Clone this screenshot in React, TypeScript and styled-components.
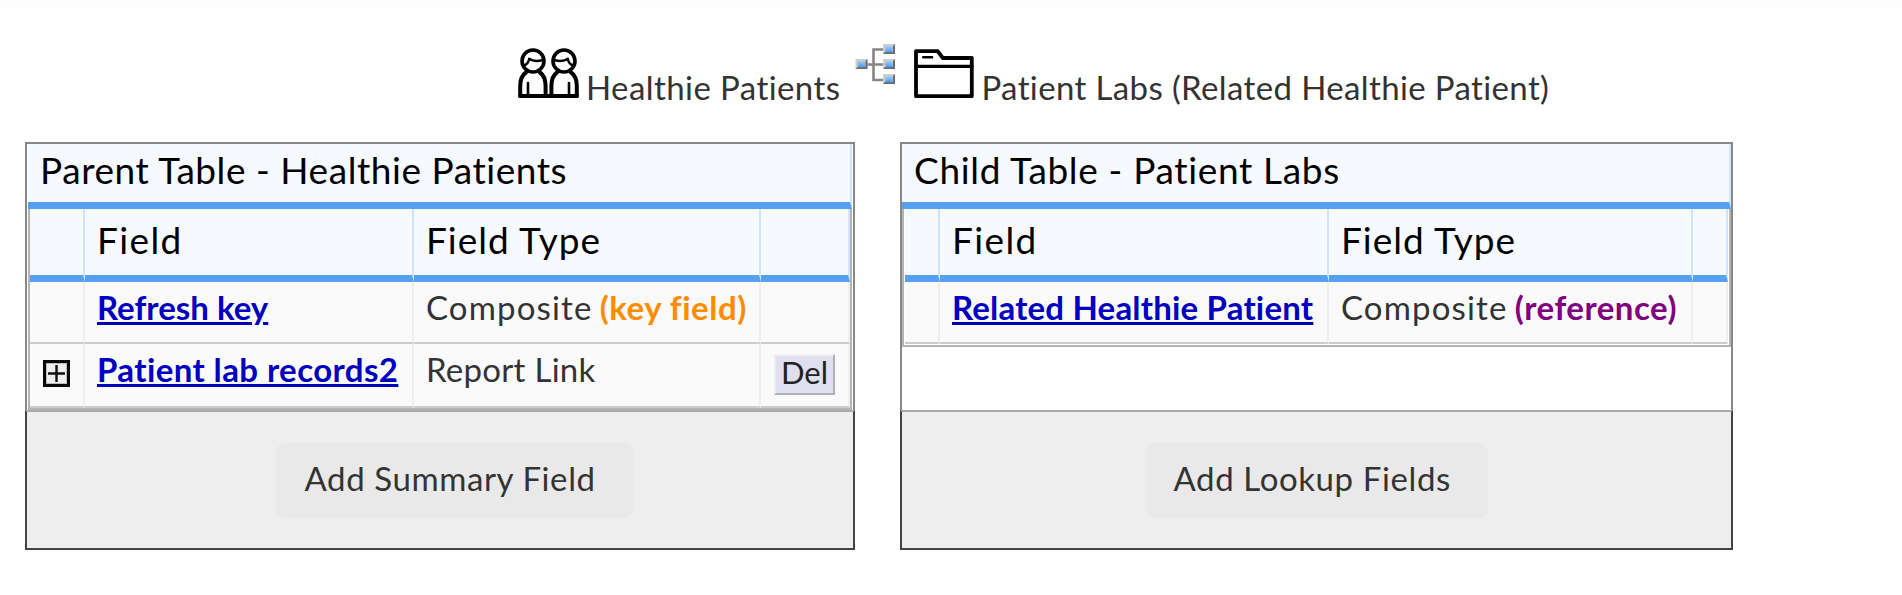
import React from "react";
import styled, { createGlobalStyle } from "styled-components";

const GlobalStyle = createGlobalStyle`
  * { box-sizing: border-box; }
  body {
    margin: 0;
    background: #fff;
    color: #333;
    font-family: "Lato", "Open Sans", sans-serif;
    font-size: 33px;
  }
`;

const Page = styled.main`
  width: 1902px;
  height: 595px;
  border-top: 7px solid #fdfdfd;
  overflow: hidden;
`;

const Relationship = styled.header`
  display: flex;
  align-items: flex-start;
  height: 135px;
  padding: 37px 0 0 518px;
`;

const IconSlot = styled.span<{ $top: number; $left?: number }>`
  flex: none;
  margin: ${(p) => p.$top}px 0 0 ${(p) => p.$left ?? 0}px;
  line-height: 0;
`;

const TableName = styled.span<{ $left: number; $spacing: number }>`
  margin: 23px 0 0 ${(p) => p.$left}px;
  line-height: 40px;
  letter-spacing: ${(p) => p.$spacing}px;
  white-space: nowrap;
`;

const Panels = styled.div`
  display: flex;
  gap: 45px;
  padding-left: 25px;
`;

const Panel = styled.section<{ $width: number }>`
  width: ${(p) => p.$width}px;
`;

const PanelBody = styled.div<{ $inset: number }>`
  height: 268px;
  border: 2px solid #888;
  border-bottom: 0;
  padding: 0 ${(p) => p.$inset}px;
`;

const PanelTitle = styled.h2<{ $spacing: number }>`
  height: 65px;
  margin: 0;
  padding-left: 12px;
  border-right: 2px solid #cfe4fa;
  border-bottom: 7px solid #55a0f0;
  background: #f6faff;
  color: #000;
  font-size: 37px;
  font-weight: 400;
  line-height: 51px;
  letter-spacing: ${(p) => p.$spacing}px;
  white-space: nowrap;
`;

const FieldTable = styled.div<{ $pad: number }>`
  border: 2px solid #b4b4b4;
  border-top: 0;
  padding: 0 ${(p) => p.$pad}px ${(p) => p.$pad}px;
`;

const Row = styled.div<{ $columns: string; $height: number }>`
  display: grid;
  grid-template-columns: ${(p) => p.$columns};
  height: ${(p) => p.$height}px;
`;

const HeadCell = styled.div<{ $spacing?: number }>`
  padding-left: 12px;
  border-right: 2px solid #cfe4fa;
  border-bottom: 7px solid #55a0f0;
  background: #f6faff;
  color: #000;
  font-size: 37px;
  line-height: 61px;
  letter-spacing: ${(p) => p.$spacing ?? 0}px;
  white-space: nowrap;
`;

const Cell = styled.div`
  padding-left: 12px;
  border-right: 2px solid #efefef;
  border-bottom: 2px solid #cccccc;
  background: #fafafa;
  line-height: 50px;
  white-space: nowrap;
`;

const FieldLink = styled.a<{ $spacing: number }>`
  color: #0000bf;
  font-weight: 700;
  letter-spacing: ${(p) => p.$spacing}px;
  text-decoration: underline;
  text-decoration-thickness: 3px;
  text-underline-offset: 2px;
`;

const TypeName = styled.span<{ $spacing: number }>`
  letter-spacing: ${(p) => p.$spacing}px;
`;

const Tag = styled.b<{ $color: string }>`
  margin-left: -1.2px;
  color: ${(p) => p.$color};
  font-weight: 700;
  letter-spacing: 0.5px;
`;

const ExpandButton = styled.button`
  display: block;
  width: 27px;
  height: 27px;
  margin: 16px 0 0 1px;
  padding: 0;
  border: 0;
  background: none;
  line-height: 0;
`;

const DeleteButton = styled.button`
  display: block;
  width: 61px;
  height: 41px;
  margin: 10px 0 0 1px;
  padding: 0 0 4px 5px;
  border: 2px solid;
  border-color: #eeeeee #b0b0b4 #b0b0b4 #eeeeee;
  background: #e0dff0;
  color: #222;
  font: 31px/33px "Lato", sans-serif;
  text-align: left;
`;

const PanelFooter = styled.footer`
  display: flex;
  height: 140px;
  border: 2px solid #444;
  border-top: 2px solid #aaa;
  background: #eeeeee;
`;

const AddButton = styled.button<{ $left: number; $width: number }>`
  width: ${(p) => p.$width}px;
  height: 75px;
  margin: 31px 0 0 ${(p) => p.$left}px;
  padding: 0 0 5px 28.5px;
  border: 0;
  border-radius: 9px;
  background: #e9e9e9;
  color: #333;
  font: 33px/70px "Lato", sans-serif;
  letter-spacing: 0.6px;
  text-align: left;
  white-space: nowrap;
`;

function Person() {
  return (
    <>
      <circle cx="15" cy="13" r="11" strokeWidth="3.6" />
      <path d="M8.5 24C4 27 2.2 32 2.2 38V48H27.6V38C27.6 32 25.8 27 21.5 24" strokeWidth="4" />
      <path d="M10 35V47" strokeWidth="2.6" />
      <path d="M5.2 17.6C8.8 17 10.6 14.5 11.2 10.8C14.5 13.2 20 13.4 25 12" strokeWidth="2.4" />
    </>
  );
}

function PeopleIcon() {
  return (
    <svg width="61" height="50" viewBox="0 0 61 50" fill="none" stroke="#000" strokeLinecap="round" strokeLinejoin="round">
      <Person />
      <g transform="translate(61 0) scale(-1 1)">
        <Person />
      </g>
      <path d="M2 48H59" strokeWidth="4" />
    </svg>
  );
}

function TreeIcon() {
  const nodes = [
    [0.5, 15],
    [28, 0],
    [28, 15],
    [28, 30],
  ];
  return (
    <svg width="40" height="40" viewBox="0 0 40 40">
      <defs>
        <linearGradient id="node" x1="0" y1="0" x2="0" y2="1">
          <stop offset="0" stopColor="#a5cdf4" />
          <stop offset="1" stopColor="#489bee" />
        </linearGradient>
      </defs>
      <path d="M28 5.5H18.5V36H28M12 20.5H28" fill="none" stroke="#858585" strokeWidth="2.6" />
      {nodes.map(([x, y]) => (
        <g key={`${x}-${y}`}>
          <rect x={x} y={y} width="12" height="10" fill="#cdcdcd" />
          <path d={`M${x + 12} ${y}v10h-12l2 -2h8v-6z`} fill="#6c6c6c" />
          <rect x={x + 2.4} y={y + 2} width="7.2" height="6.2" fill="url(#node)" />
        </g>
      ))}
    </svg>
  );
}

function FolderIcon() {
  return (
    <svg width="60" height="50" viewBox="0 0 60 50" fill="none" stroke="#000" strokeLinejoin="round" strokeLinecap="round">
      <path d="M2 2.2H23.7L28.8 9H57.8V47.2H2Z" strokeWidth="3.8" />
      <path d="M2 17.4H57.8" strokeWidth="3.4" />
      <path d="M9.3 8.3H18" strokeWidth="2.6" />
    </svg>
  );
}

function PlusBoxIcon() {
  return (
    <svg width="27" height="27" viewBox="0 0 27 27">
      <rect width="27" height="27" fill="#080808" />
      <rect x="3" y="3" width="21" height="21" fill="#bdbdbd" />
      <rect x="4" y="4" width="19" height="19" fill="#efefef" />
      <path d="M5 13.5H22M13.5 5V22" stroke="#111" strokeWidth="2.4" />
    </svg>
  );
}

const parentColumns = "55px 329px 347px 89px";
const childColumns = "35px 389px 364px 35px";

export default function App() {
  return (
    <>
      <GlobalStyle />
      <Page>
        <Relationship>
          <IconSlot $top={4}>
            <PeopleIcon />
          </IconSlot>
          <TableName $left={7} $spacing={0.42}>Healthie Patients</TableName>
          <IconSlot $top={0} $left={15}>
            <TreeIcon />
          </IconSlot>
          <IconSlot $top={5} $left={19}>
            <FolderIcon />
          </IconSlot>
          <TableName $left={7} $spacing={0.37}>Patient Labs (Related Healthie Patient)</TableName>
        </Relationship>

        <Panels>
          <Panel $width={830}>
            <PanelBody $inset={1}>
              <PanelTitle $spacing={0.56}>Parent Table - Healthie Patients</PanelTitle>
              <FieldTable $pad={0}>
                <Row $columns={parentColumns} $height={73}>
                  <HeadCell />
                  <HeadCell $spacing={1.4}>Field</HeadCell>
                  <HeadCell $spacing={1}>Field Type</HeadCell>
                  <HeadCell />
                </Row>
                <Row $columns={parentColumns} $height={62}>
                  <Cell />
                  <Cell>
                    <FieldLink $spacing={0}>Refresh key</FieldLink>
                  </Cell>
                  <Cell>
                    <TypeName $spacing={1.15}>Composite</TypeName> <Tag $color="#ff8c00">(key field)</Tag>
                  </Cell>
                  <Cell />
                </Row>
                <Row $columns={parentColumns} $height={64}>
                  <Cell>
                    <ExpandButton>
                      <PlusBoxIcon />
                    </ExpandButton>
                  </Cell>
                  <Cell>
                    <FieldLink $spacing={0.4}>Patient lab records2</FieldLink>
                  </Cell>
                  <Cell>
                    <TypeName $spacing={0.27}>Report Link</TypeName>
                  </Cell>
                  <Cell>
                    <DeleteButton>Del</DeleteButton>
                  </Cell>
                </Row>
              </FieldTable>
            </PanelBody>
            <PanelFooter>
              <AddButton $left={249} $width={357}>Add Summary Field</AddButton>
            </PanelFooter>
          </Panel>

          <Panel $width={833}>
            <PanelBody $inset={0}>
              <PanelTitle $spacing={0.67}>Child Table - Patient Labs</PanelTitle>
              <FieldTable $pad={1}>
                <Row $columns={childColumns} $height={73}>
                  <HeadCell />
                  <HeadCell $spacing={1.4}>Field</HeadCell>
                  <HeadCell $spacing={1}>Field Type</HeadCell>
                  <HeadCell />
                </Row>
                <Row $columns={childColumns} $height={62}>
                  <Cell />
                  <Cell>
                    <FieldLink $spacing={0.19}>Related Healthie Patient</FieldLink>
                  </Cell>
                  <Cell>
                    <TypeName $spacing={1.15}>Composite</TypeName> <Tag $color="#800080">(reference)</Tag>
                  </Cell>
                  <Cell />
                </Row>
              </FieldTable>
            </PanelBody>
            <PanelFooter>
              <AddButton $left={243} $width={343}>Add Lookup Fields</AddButton>
            </PanelFooter>
          </Panel>
        </Panels>
      </Page>
    </>
  );
}
